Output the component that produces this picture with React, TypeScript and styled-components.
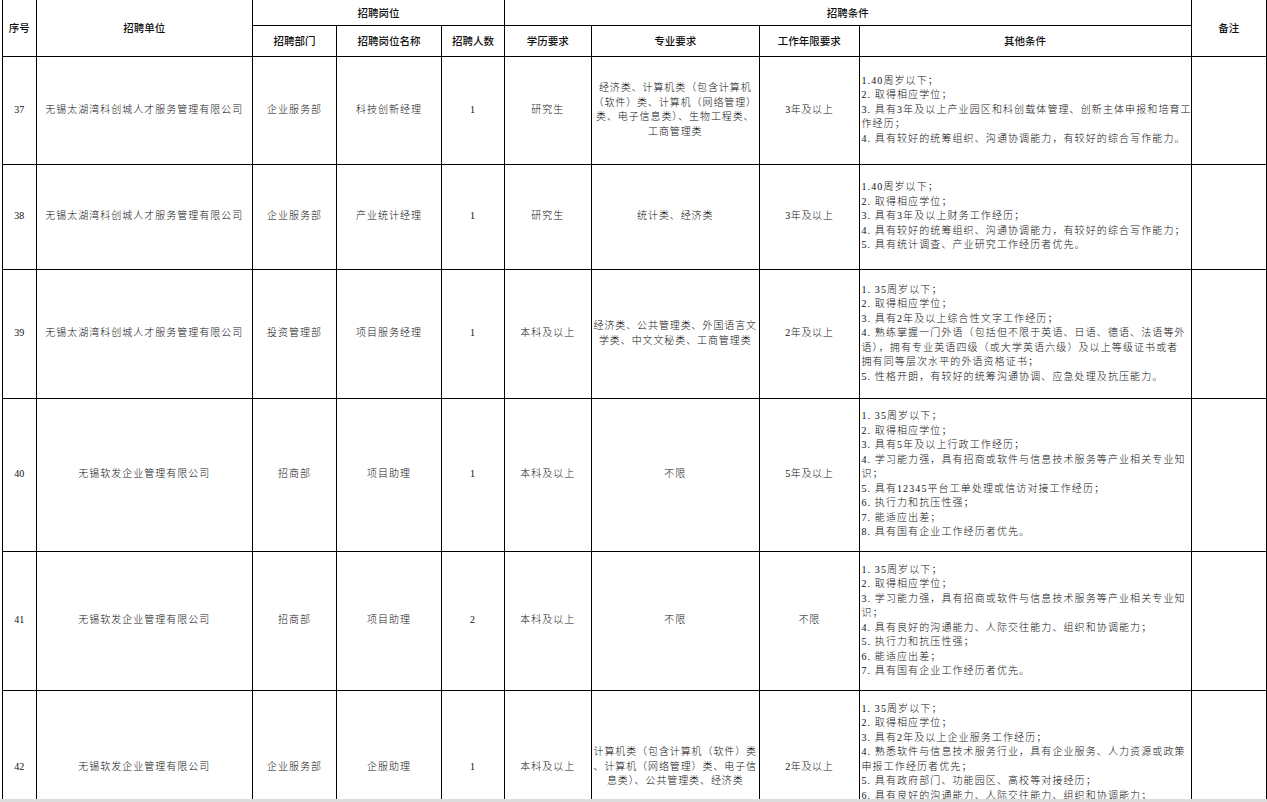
import styled, { createGlobalStyle } from "styled-components";

const GlobalStyle = createGlobalStyle`
    html, body {
        margin: 0;
        padding: 0;
        background: #ffffff;
        overflow: hidden;
    }
`;

const Page = styled.div`
    width: 1267px;
    height: 802px;
    display: flex;
    flex-direction: column;
    background: #ffffff;
`;

const Sheet = styled.div`
    flex: 1;
    overflow: hidden;
    padding-left: 2px;
`;

const BottomBar = styled.div`
    height: 3px;
    background: #dcdcdc;
`;

const Table = styled.table`
    border-collapse: collapse;
    table-layout: fixed;
    width: 1264px;
    color: #111;
`;

const HeadRow = styled.tr<{ $h: number }>`
    height: ${(p) => p.$h}px;
`;

const Th = styled.th<{ $noTop?: boolean }>`
    border: 1px solid #000;
    border-top: ${(p) => (p.$noTop ? "none" : "1px solid #000")};
    padding: 0;
    font-family: "Noto Sans CJK SC", "Noto Sans", sans-serif;
    font-size: 10.5px;
    font-weight: 500;
    text-align: center;
    vertical-align: middle;
    color: #111;
`;

const Row = styled.tr<{ $h: number }>`
    height: ${(p) => p.$h}px;
`;

const Td = styled.td<{ $spacing?: number }>`
    border: 1px solid #000;
    padding: 0 2px;
    font-family: "Liberation Serif", "Noto Sans CJK SC", serif;
    font-size: 10px;
    font-weight: 300;
    letter-spacing: ${(p) => p.$spacing ?? 1}px;
    line-height: 14.5px;
    text-align: center;
    vertical-align: middle;
    white-space: nowrap;
    overflow: hidden;
`;

const ListTd = styled(Td)`
    text-align: left;
    letter-spacing: 1.1px;
`;

const Line = styled.div`
    white-space: nowrap;
`;

type Job = {
    no: number;
    unit: string;
    dept: string;
    title: string;
    count: string;
    edu: string;
    major: string[];
    years: string;
    other: string[];
    h: number;
};

const SOFT_UNIT = "无锡软发企业管理有限公司";
const TAIHU_UNIT = "无锡太湖湾科创城人才服务管理有限公司";

const jobs: Job[] = [
    {
        no: 37,
        unit: TAIHU_UNIT,
        dept: "企业服务部",
        title: "科技创新经理",
        count: "1",
        edu: "研究生",
        major: [
            "经济类、计算机类（包含计算机",
            "（软件）类、计算机（网络管理）",
            "类、电子信息类）、生物工程类、",
            "工商管理类",
        ],
        years: "3年及以上",
        other: [
            "1.40周岁以下；",
            "2. 取得相应学位；",
            "3. 具有3年及以上产业园区和科创载体管理、创新主体申报和培育工",
            "作经历；",
            "4. 具有较好的统筹组织、沟通协调能力，有较好的综合写作能力。",
        ],
        h: 108,
    },
    {
        no: 38,
        unit: TAIHU_UNIT,
        dept: "企业服务部",
        title: "产业统计经理",
        count: "1",
        edu: "研究生",
        major: ["统计类、经济类"],
        years: "3年及以上",
        other: [
            "1.40周岁以下；",
            "2. 取得相应学位；",
            "3. 具有3年及以上财务工作经历；",
            "4. 具有较好的统筹组织、沟通协调能力，有较好的综合写作能力；",
            "5. 具有统计调查、产业研究工作经历者优先。",
        ],
        h: 105,
    },
    {
        no: 39,
        unit: TAIHU_UNIT,
        dept: "投资管理部",
        title: "项目服务经理",
        count: "1",
        edu: "本科及以上",
        major: ["经济类、公共管理类、外国语言文", "学类、中文文秘类、工商管理类"],
        years: "2年及以上",
        other: [
            "1. 35周岁以下；",
            "2. 取得相应学位；",
            "3. 具有2年及以上综合性文字工作经历；",
            "4. 熟练掌握一门外语（包括但不限于英语、日语、德语、法语等外",
            "语），拥有专业英语四级（或大学英语六级）及以上等级证书或者",
            "拥有同等层次水平的外语资格证书；",
            "5. 性格开朗，有较好的统筹沟通协调、应急处理及抗压能力。",
        ],
        h: 129,
    },
    {
        no: 40,
        unit: SOFT_UNIT,
        dept: "招商部",
        title: "项目助理",
        count: "1",
        edu: "本科及以上",
        major: ["不限"],
        years: "5年及以上",
        other: [
            "1. 35周岁以下；",
            "2. 取得相应学位；",
            "3. 具有5年及以上行政工作经历；",
            "4. 学习能力强，具有招商或软件与信息技术服务等产业相关专业知",
            "识；",
            "5. 具有12345平台工单处理或信访对接工作经历；",
            "6. 执行力和抗压性强；",
            "7. 能适应出差；",
            "8. 具有国有企业工作经历者优先。",
        ],
        h: 153,
    },
    {
        no: 41,
        unit: SOFT_UNIT,
        dept: "招商部",
        title: "项目助理",
        count: "2",
        edu: "本科及以上",
        major: ["不限"],
        years: "不限",
        other: [
            "1. 35周岁以下；",
            "2. 取得相应学位；",
            "3. 学习能力强，具有招商或软件与信息技术服务等产业相关专业知",
            "识；",
            "4. 具有良好的沟通能力、人际交往能力、组织和协调能力；",
            "5. 执行力和抗压性强；",
            "6. 能适应出差；",
            "7. 具有国有企业工作经历者优先。",
        ],
        h: 139,
    },
    {
        no: 42,
        unit: SOFT_UNIT,
        dept: "企业服务部",
        title: "企服助理",
        count: "1",
        edu: "本科及以上",
        major: [
            "计算机类（包含计算机（软件）类",
            "、计算机（网络管理）类、电子信",
            "息类）、公共管理类、经济类",
        ],
        years: "2年及以上",
        other: [
            "1. 35周岁以下；",
            "2. 取得相应学位；",
            "3. 具有2年及以上企业服务工作经历；",
            "4. 熟悉软件与信息技术服务行业，具有企业服务、人力资源或政策",
            "申报工作经历者优先；",
            "5. 具有政府部门、功能园区、高校等对接经历；",
            "6. 具有良好的沟通能力、人际交往能力、组织和协调能力；",
            "7. 执行力和抗压性强；",
            "8. 具有国有企业工作经历者优先。",
        ],
        h: 154,
    },
];

// column widths measured off the grid lines
const widths = [33.5, 216.5, 84, 105, 63, 86.5, 168.5, 99.5, 332, 75.5];

export default function App() {
    return (
        <>
            <GlobalStyle />
            <Page>
                <Sheet>
                    <Table>
                        <colgroup>
                            {widths.map((w, i) => (
                                <col key={i} style={{ width: w }} />
                            ))}
                        </colgroup>
                        <thead>
                            <HeadRow $h={25}>
                                <Th $noTop rowSpan={2}>序号</Th>
                                <Th $noTop rowSpan={2}>招聘单位</Th>
                                <Th $noTop colSpan={3}>招聘岗位</Th>
                                <Th $noTop colSpan={4}>招聘条件</Th>
                                <Th $noTop rowSpan={2}>备注</Th>
                            </HeadRow>
                            <HeadRow $h={31}>
                                <Th>招聘部门</Th>
                                <Th>招聘岗位名称</Th>
                                <Th>招聘人数</Th>
                                <Th>学历要求</Th>
                                <Th>专业要求</Th>
                                <Th>工作年限要求</Th>
                                <Th>其他条件</Th>
                            </HeadRow>
                        </thead>
                        <tbody>
                            {jobs.map((j) => (
                                <Row key={j.no} $h={j.h}>
                                    <Td $spacing={0}>{j.no}</Td>
                                    <Td>{j.unit}</Td>
                                    <Td>{j.dept}</Td>
                                    <Td>{j.title}</Td>
                                    <Td>{j.count}</Td>
                                    <Td>{j.edu}</Td>
                                    <Td $spacing={0.9}>
                                        {j.major.map((m, i) => (
                                            <Line key={i}>{m}</Line>
                                        ))}
                                    </Td>
                                    <Td $spacing={0.6}>{j.years}</Td>
                                    <ListTd>
                                        {j.other.map((o, i) => (
                                            <Line key={i}>{o}</Line>
                                        ))}
                                    </ListTd>
                                    <Td />
                                </Row>
                            ))}
                        </tbody>
                    </Table>
                </Sheet>
                <BottomBar />
            </Page>
        </>
    );
}
